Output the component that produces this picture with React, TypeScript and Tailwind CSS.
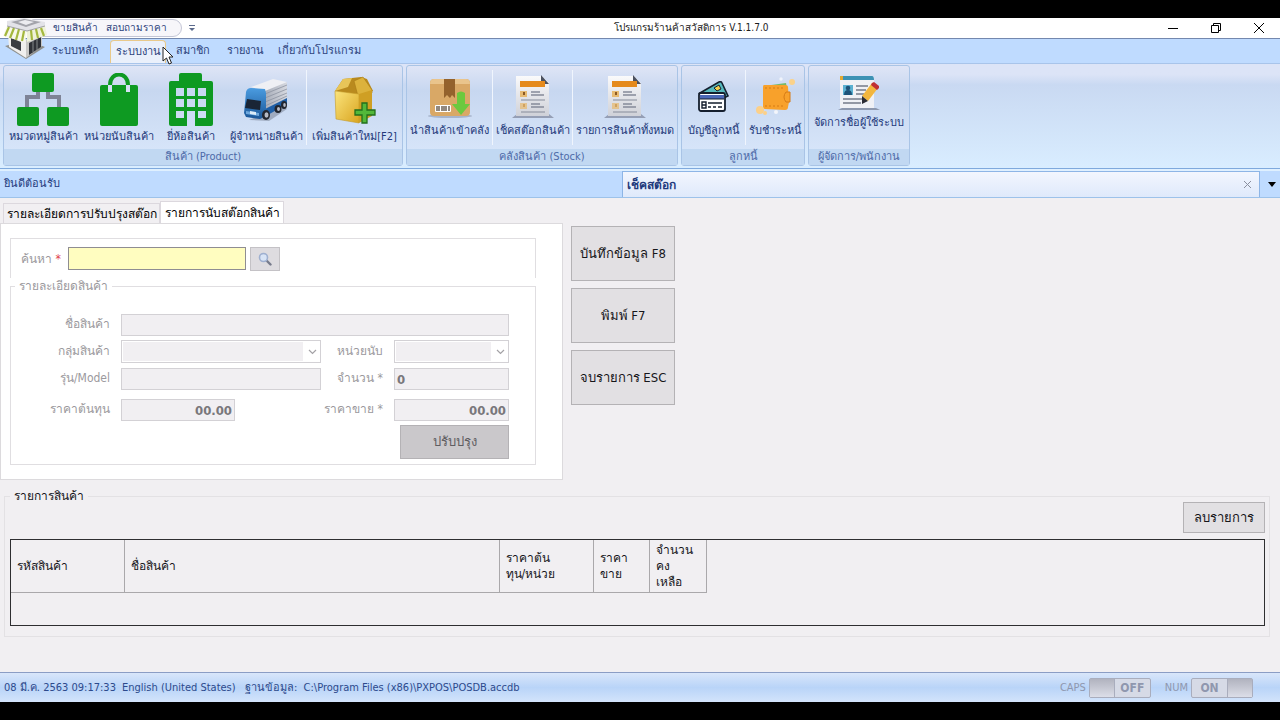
import type { ReactNode } from "react";

const OrgIcon = () => (
  <svg viewBox="0 0 54 54" className="h-[54px] w-[54px]" aria-hidden="true">
    <path d="M22 18v6H11v12M32 18v6h11v12" fill="none" stroke="#7e8396" strokeWidth="4" />
    <rect x="16" y="0" width="22" height="19" rx="2" fill="#0e9a22" />
    <rect x="1" y="34" width="22" height="19" rx="2" fill="#0e9a22" />
    <rect x="31" y="34" width="22" height="19" rx="2" fill="#0e9a22" />
  </svg>
);

const BagIcon = () => (
  <svg viewBox="0 0 54 54" className="h-[54px] w-[54px]" aria-hidden="true">
    <path d="M10 12h34q2 0 2 2v37q0 2-2 2H10q-2 0-2-2V14q0-2 2-2z" fill="#0e9a22" />
    <path d="M18 12v7M36 12v7" stroke="#d5e1f5" strokeWidth="4" />
    <path d="M18 12C18-2 36-2 36 12" fill="none" stroke="#0e9a22" strokeWidth="4" />
  </svg>
);

const BuildingIcon = () => (
  <svg viewBox="0 0 54 54" className="h-[54px] w-[54px]" aria-hidden="true">
    <path
      fillRule="evenodd"
      d="M17 0h19q2 0 2 2v6h9q2 0 2 2v41q0 2-2 2H31V38H23v15H7q-2 0-2-2V10q0-2 2-2h8V2q0-2 2-2zM12 15v8h8v-8zM23 15v8h8v-8zM34 15v8h8v-8zM12 26v8h8v-8zM23 26v8h8v-8zM34 26v8h8v-8zM12 38v7h8v-7zM34 38v7h8v-7z"
      fill="#0e9a22"
    />
  </svg>
);

const TruckIcon = () => (
  <svg viewBox="0 0 46 42" className="h-[42px] w-[46px]" aria-hidden="true">
    <defs>
      <linearGradient id="cab" x1="0" y1="0" x2="0" y2="1">
        <stop offset="0" stopColor="#4b9ce0" />
        <stop offset="1" stopColor="#1a5698" />
      </linearGradient>
      <linearGradient id="trailer" x1="0" y1="0" x2="1" y2="0">
        <stop offset="0" stopColor="#a4a9b5" />
        <stop offset="1" stopColor="#d6d9e0" />
      </linearGradient>
    </defs>
    <path d="M6 41l20 1 18-12-4-4z" fill="#5b6272" opacity=".4" />
    <path d="M20 10L44 3v21L22 35z" fill="url(#trailer)" />
    <path d="M8 8L30 0l14 3-22 9z" fill="#eff0f4" />
    <path d="M22 15l22-9M22 19l22-9M22 23l22-9M22 27l22-10" stroke="#8d93a1" strokeWidth=".8" />
    <path d="M22 30l22-11v6L23 37z" fill="#1f5fa6" />
    <path d="M3 13q1-4 5-4l14 1 1 4v23l-6 3-14-2-2-4 1-10z" fill="url(#cab)" />
    <path d="M4 20l14 2-1 9-15-2z" fill="#1a2536" />
    <path d="M3 32l13 2v3L3 35z" fill="#6ea8dd" />
    <path d="M7 32l6 1v3l-6-1z" fill="#dcecf8" />
    <ellipse cx="23" cy="36" rx="4" ry="5" fill="#22262f" />
    <ellipse cx="23.500" cy="36" rx="2" ry="2.700" fill="#b5bac5" />
    <ellipse cx="35" cy="30" rx="3.500" ry="4" fill="#22262f" />
    <ellipse cx="35.500" cy="30" rx="1.500" ry="2" fill="#b5bac5" />
    <ellipse cx="41" cy="26" rx="3" ry="4" fill="#22262f" />
    <ellipse cx="41.500" cy="26" rx="1.300" ry="2" fill="#b5bac5" />
  </svg>
);

const BoxAddIcon = () => (
  <svg viewBox="0 0 44 48" className="h-[48px] w-[44px]" aria-hidden="true">
    <defs>
      <linearGradient id="gold" x1="0" y1="0" x2="1" y2="1">
        <stop offset="0" stopColor="#fbe47c" />
        <stop offset="1" stopColor="#d9a520" />
      </linearGradient>
    </defs>
    <path d="M2 15L10 3 28 1l6 2 6 12-14 4z" fill="#b98a1e" />
    <path d="M10 3l9-1-4 9-13 4z" fill="#e8c558" />
    <path d="M21 5l9-4 9 13v3l-14 3z" fill="#dcb23c" stroke="#a87b16" strokeWidth=".6" />
    <path d="M2 15l24 3v29L3 43z" fill="url(#gold)" stroke="#c49a26" strokeWidth=".6" />
    <path d="M26 18l13-4v26l-13 7z" fill="#cf9f24" />
    <path d="M29 27h5v7h8v5h-8v8h-5v-8h-7v-5h7z" fill="#52b83a" stroke="#226f1c" strokeWidth="1.3" />
  </svg>
);

const PackageIcon = () => (
  <svg viewBox="0 0 44 44" className="h-[44px] w-[44px]" aria-hidden="true">
    <ellipse cx="22" cy="41" rx="22" ry="2" fill="#7f8ba3" opacity=".5" />
    <rect x="2" y="4" width="40" height="37" rx="4" fill="#d9a866" />
    <path d="M6 4h32q4 0 4 5H2q0-5 4-5z" fill="#e9c48c" />
    <path d="M16 4h11v19l-3-3-2 3-3-3-3 3z" fill="#94622c" />
    <rect x="7" y="30" width="16" height="7" rx="1" fill="#fff" />
    <path d="M9 31v5M11 31v5M14 31v5M16 31v5M18 31v5M21 31v5" stroke="#4a3b2c" strokeWidth="1.2" />
    <path d="M29 18q4-3 8 0v11h5l-9 11-9-11h5z" fill="#6cc93e" />
  </svg>
);

const DocumentIcon = () => (
  <svg viewBox="0 0 42 44" className="h-[44px] w-[42px]" aria-hidden="true">
    <defs>
      <linearGradient id="paper" x1="0" y1="0" x2="0" y2="1">
        <stop offset="0" stopColor="#fafafb" />
        <stop offset="1" stopColor="#cfd1d8" />
      </linearGradient>
    </defs>
    <path d="M0 43L5 39h32l5 4z" fill="#818aa0" opacity=".75" />
    <path d="M4 1h26l7 7v33H4z" fill="url(#paper)" />
    <path d="M29 0l8 9h-8z" fill="#4b5160" />
    <path d="M8 6h25v6H8z" fill="#e58a1c" />
    <rect x="8" y="16" width="7" height="6" fill="#e7bb73" />
    <path d="M11 17h2v3h-2zM11 29h2v3h-2z" fill="#8c5a24" />
    <path d="M19 17h9M19 20h13M19 29h9M19 32h13" stroke="#858b99" strokeWidth="1.4" />
    <rect x="8" y="28" width="7" height="6" fill="#e7bb73" fillOpacity=".75" />
    <path d="M9 25h24M9 37h24" stroke="#858b99" strokeWidth="1.2" />
  </svg>
);

const CardsIcon = () => (
  <svg viewBox="0 0 32 32" className="h-8 w-8" aria-hidden="true">
    <path d="M2 12L21 1q2-1 3 1l6 13-4 2z" fill="#56b9bd" stroke="#151f2e" strokeWidth="1.6" />
    <path d="M16 7l5-3 2 4-4 2z" fill="#f0cf4f" stroke="#151f2e" />
    <rect x="1" y="12" width="26" height="18" rx="2" fill="#fff" stroke="#151f2e" strokeWidth="1.8" />
    <path d="M2 14h24v4H2z" fill="#4b68b8" />
    <path d="M2 18h24" stroke="#151f2e" />
    <path d="M4 21h4v6H4zM4 24h4M10 22h14M10 26h3M15 26h3M20 26h4" fill="none" stroke="#151f2e" strokeWidth="1.4" />
  </svg>
);

const WalletIcon = () => (
  <svg viewBox="0 0 40 40" className="h-10 w-10" aria-hidden="true">
    <path d="M9 9l22-3 1 6H9z" fill="#79b868" />
    <path d="M9 8q-1 0-1 2v20q0 2 2 2l20 1q3 0 3-3l1-5-1-15q0-2-3-2H11z" fill="#f8a12b" />
    <path d="M10 11h20M10 29h20" stroke="#d67b16" strokeDasharray="2 2" />
    <path d="M31 15h4v10h-4q-4-5 0-10z" fill="#f8a12b" stroke="#d67b16" />
    <circle cx="37" cy="5" r="3" fill="#fbd28a" />
    <circle cx="5" cy="33" r="4" fill="#fcd089" />
    <circle cx="10" cy="36" r="2" fill="#fcd089" />
    <circle cx="26" cy="2" r="1.7" fill="#f0f3fb" />
    <circle cx="21" cy="35" r="2" fill="#f3f5fb" />
  </svg>
);

const ProfileIcon = () => (
  <svg viewBox="0 0 42 36" className="h-9 w-[42px]" aria-hidden="true">
    <path d="M0 35l4-2h34l4 2z" fill="#7d879c" opacity=".8" />
    <path d="M2 2h34v31H2z" fill="#f0f1f5" />
    <path d="M2 1h32q2 0 2 4H2z" fill="#3c92b4" />
    <path d="M2 1h3v4H2z" fill="#e2a832" />
    <rect x="5" y="10" width="10" height="10" fill="#5bb1d1" />
    <circle cx="10" cy="13" r="2.3" fill="#1e5378" />
    <path d="M6 20q0-5 4-5t4 5z" fill="#1e5378" />
    <path d="M18 11h12M18 15h10M18 19h8M5 24h20M5 28h18" stroke="#747b89" strokeWidth="1.3" />
    <path d="M34 8l6 5-10 13-6-5z" fill="#f2b63e" />
    <path d="M34 8l2-1 5 4v2l-2 2-6-5z" fill="#bf2f35" />
    <path d="M24 21l6 5-6 3z" fill="#2b2c33" />
  </svg>
);

const StoreIcon = () => (
  <svg viewBox="0 0 46 42" className="h-[42px] w-[46px]" aria-hidden="true">
    <path d="M3 28l21 13 19-12-18-7z" fill="#8f908d" />
    <path d="M6 15l18 7v18L7 29z" fill="#f0efee" />
    <path d="M24 22l16-6v12L24 40z" fill="#c9c8c6" />
    <path d="M9 20l10 4v9L9 28z" fill="#3a3d42" />
    <path d="M27 25l12-6v10l-12 8z" fill="#2f3237" />
    <path d="M31 23v11M35 21v11" stroke="#868a8c" />
    <path d="M5 3L22 0l21 4v4L25 13 5 9z" fill="#e3e3e8" />
    <path d="M9 4l13-3 17 3-15 5z" fill="#a3a4ab" />
    <path d="M16 4l7-2 9 2-8 3z" fill="#ececf0" />
    <path d="M5 8l20 5-2 11L1 18z" fill="#f8f9ea" />
    <path d="M25 13l18-5 2 9-20 7z" fill="#eff2d8" />
    <path
      d="M7 9L3 18M12 10L8 20M17 11l-3 11M22 13l-2 10M29 12l1 10M34 11l2 9M39 10l3 8"
      stroke="#a4b83e"
      strokeWidth="2.200"
    />
    <path d="M5 8l20 5 18-5" fill="none" stroke="#8d8e93" strokeWidth=".8" />
  </svg>
);

const MagnifierIcon = () => (
  <svg viewBox="0 0 14 14" className="h-3.5 w-3.5" aria-hidden="true">
    <path d="M8.5 8.5l4 4" stroke="#777b8c" strokeWidth="2.4" strokeLinecap="round" />
    <circle cx="5.5" cy="5.5" r="4" fill="#d8e4f6" stroke="#9fb0d0" strokeWidth="1.6" />
  </svg>
);

const Chevron = () => (
  <svg viewBox="0 0 9 6" className="pointer-events-none absolute top-[9px] right-1 h-1.5 w-[9px]" aria-hidden="true">
    <path d="M1 1l3.500 3.500L8 1" fill="none" stroke="#a3a1a5" strokeWidth="1.200" />
  </svg>
);

type Item = { label: string; icon: ReactNode; width: string };
type Group = { title: string; iconHeight: string; items: Item[] };

const groups: Group[] = [
  {
    title: "สินค้า (Product)",
    iconHeight: "h-[60px]",
    items: [
      { label: "หมวดหมู่สินค้า", icon: <OrgIcon />, width: "w-[78px]" },
      { label: "หน่วยนับสินค้า", icon: <BagIcon />, width: "w-[74px]" },
      { label: "ยี่ห้อสินค้า", icon: <BuildingIcon />, width: "w-[70px]" },
      { label: "ผู้จำหน่ายสินค้า", icon: <TruckIcon />, width: "w-[80px]" },
      { label: "เพิ่มสินค้าใหม่[F2]", icon: <BoxAddIcon />, width: "w-[96px] border-l" },
    ],
  },
  {
    title: "คลังสินค้า (Stock)",
    iconHeight: "h-[53px]",
    items: [
      { label: "นำสินค้าเข้าคลัง", icon: <PackageIcon />, width: "w-[85px]" },
      { label: "เช็คสต๊อกสินค้า", icon: <DocumentIcon />, width: "w-[80px] border-l" },
      { label: "รายการสินค้าทั้งหมด", icon: <DocumentIcon />, width: "w-[105px] border-l" },
    ],
  },
  {
    title: "ลูกหนี้",
    iconHeight: "h-[53px]",
    items: [
      { label: "บัญชีลูกหนี้", icon: <CardsIcon />, width: "w-[63px]" },
      { label: "รับชำระหนี้", icon: <WalletIcon />, width: "w-[59px] border-l" },
    ],
  },
  {
    title: "ผู้จัดการ/พนักงาน",
    iconHeight: "h-[45px]",
    items: [{ label: "จัดการชื่อผู้ใช้ระบบ", icon: <ProfileIcon />, width: "w-[100px]" }],
  },
];

const fieldBox = "h-[22px] w-full border border-[#d3d1d5] bg-[#f1eff2] px-0.5 text-[13px] font-bold text-[#79777b]";
const selectBox =
  "block h-[23px] w-full appearance-none border-y-2 border-r-[18px] border-l-2 border-white bg-[#f1eff2] outline outline-[#d3d1d5] -outline-offset-1";
const fieldLabel = "pr-0.5 pb-1 text-right whitespace-nowrap text-[#9b999d]";
const actionButton = "border border-[#b4b2b5] bg-[#e2e0e3] text-[13px] text-[#16161a]";

export default function App() {
  return (
    <div className="flex min-h-screen flex-col bg-black py-[18px] font-['DejaVu_Sans_Condensed','DejaVu_Sans',sans-serif] text-[12px] leading-4">
      <div className="relative flex grow flex-col bg-[#f1eff2]">
        <header className="text-[11px]">
          <div className="flex h-5 items-center bg-white text-[#1c1c1c]">
            <nav className="ml-8 flex h-[18px] w-[150px] items-center gap-2 rounded-r-full border border-[#c4c6d6] bg-[#f7f6fa] pl-5 text-[10px] whitespace-nowrap text-[#2d437c]">
              <button type="button">ขายสินค้า</button>
              <button type="button">สอบถามราคา</button>
            </nav>
            <button type="button" aria-label="ปรับแต่งแถบเครื่องมือ" className="ml-1.5">
              <svg viewBox="0 0 8 8" className="h-2 w-2" aria-hidden="true">
                <path d="M1 1.500h6" stroke="#5b6a8c" />
                <path d="M1 4h6L4 7z" fill="#5b6a8c" />
              </svg>
            </button>
            <h1 className="grow pl-9 text-center text-[10px]">โปรแกรมร้านค้าสวัสดิการ V.1.1.7.0</h1>
            <div className="flex shrink-0 text-black">
              <button type="button" aria-label="ย่อหน้าต่าง" className="flex w-[43px] justify-center">
                <svg viewBox="0 0 10 10" className="h-2.5 w-2.5"><path d="M0 5.500h10" stroke="currentColor" /></svg>
              </button>
              <button type="button" aria-label="คืนขนาดหน้าต่าง" className="flex w-[43px] justify-center">
                <svg viewBox="0 0 10 10" className="h-2.5 w-2.5"><path d="M.5 2.500h7v7h-7zM2.500 2.500v-2h7v7h-2" fill="none" stroke="currentColor" /></svg>
              </button>
              <button type="button" aria-label="ปิดหน้าต่าง" className="flex w-[43px] justify-center">
                <svg viewBox="0 0 10 10" className="h-2.5 w-2.5"><path d="M0 0l10 10M10 0L0 10" stroke="currentColor" /></svg>
              </button>
            </div>
          </div>

          <nav className="flex h-[25px] items-end border-t border-[#7488ae] bg-[#bfdbff] pl-10 text-[#2d437c]">
            <a href="#main" className="flex h-6 w-[70px] items-center justify-center">ระบบหลัก</a>
            <a href="#work" className="flex h-[23px] w-[56px] items-center justify-center rounded-t border border-b-0 border-[#e9c98a] bg-[#eaf0fb]">ระบบงาน</a>
            <a href="#member" className="flex h-6 w-[54px] items-center justify-center">สมาชิก</a>
            <a href="#report" className="flex h-6 w-[50px] items-center justify-center">รายงาน</a>
            <a href="#about" className="flex h-6 w-[98px] items-center justify-center">เกี่ยวกับโปรแกรม</a>
          </nav>

          <div className="flex gap-[3px] border-y border-b-[#7fa9dd] border-t-[#a8c4ea] bg-linear-to-b from-[#dce4f7] from-10% via-[#c9d9f2] via-20% to-[#d9edff] px-[3px] pt-px pb-0.5">
            {groups.map((group) => (
              <section
                key={group.title}
                className="flex flex-col rounded-[3px] border border-[#a9c4e6] bg-linear-to-b from-[#dfe5f6] via-[#c7d7f0] via-25% to-[#dae8fb]"
              >
                <div className="flex h-[83px] py-1">
                  {group.items.map((item) => (
                    <button
                      key={item.label}
                      type="button"
                      className={`flex flex-col items-center border-[#f0f5fd] whitespace-nowrap text-[#23397a] ${item.width}`}
                    >
                      <span className={`flex items-center justify-center ${group.iconHeight}`}>{item.icon}</span>
                      <span>{item.label}</span>
                    </button>
                  ))}
                </div>
                <h2 className="bg-[#c1d8f2] text-center text-[#4d6aa8]">{group.title}</h2>
              </section>
            ))}
          </div>
        </header>

        <nav className="flex h-[29px] border-t-2 border-b border-t-[#dff0ff] border-b-[#9dc2ea] bg-[#bfdbff] text-[11px] text-[#1e3a7c]">
          <a href="#welcome" className="flex w-[48.6%] items-center pl-1">ยินดีต้อนรับ</a>
          <div className="flex grow items-center justify-between border border-b-0 border-[#8db5e6] bg-linear-to-b from-[#f2f6fe] to-[#dfe9fb] pr-2 pl-1">
            <a href="#stock" className="text-[12px] font-bold">เช็คสต๊อก</a>
            <button type="button" aria-label="ปิดแท็บ">
              <svg viewBox="0 0 7 7" className="h-[7px] w-[7px]"><path d="M0 0l7 7M7 0L0 7" stroke="#8a8f9e" /></svg>
            </button>
          </div>
          <button type="button" aria-label="รายการแท็บ" className="flex w-5 items-center justify-end">
            <svg viewBox="0 0 8 5" className="mr-1 h-[5px] w-2"><path d="M0 0h8L4 5z" /></svg>
          </button>
        </nav>

        <main className="grow">
          <div className="flex items-start gap-2 pt-[3px]">
            <div className="w-[563px] shrink-0">
              <div className="flex items-end pl-[3px] text-black" role="tablist">
                <button type="button" role="tab" aria-selected="false" className="h-5 w-[157px] border border-b-0 border-[#dcd8de] whitespace-nowrap">
                  รายละเอียดการปรับปรุงสต๊อก
                </button>
                <button type="button" role="tab" aria-selected="true" className="h-[22px] w-[124px] border border-b-0 border-[#dcd8de] bg-white whitespace-nowrap">
                  รายการนับสต๊อกสินค้า
                </button>
              </div>
              <form className="border border-[#dcdadd] bg-white pt-3.5 pr-[26px] pb-3.5 pl-[9px]">
                <div className="flex h-10 items-center border border-b-0 border-[#e0dee1] pl-2.5 text-[#9b999d]">
                  <label htmlFor="search" className="w-[47px] whitespace-nowrap">
                    ค้นหา <span className="text-[#e0404a]">*</span>
                  </label>
                  <input id="search" className="h-[23px] w-[178px] border border-[#8f8d92] bg-[#fffdc0] px-1" />
                  <button type="button" aria-label="ค้นหาสินค้า" className="ml-1 flex h-6 w-[30px] items-center justify-center border border-[#c4c2c6] bg-[#dedce0]">
                    <MagnifierIcon />
                  </button>
                </div>
                <fieldset className="border border-[#e0dee1] pb-[5px]">
                  <legend className="ml-1 px-1 text-[#9b999d]">รายละเอียดสินค้า</legend>
                  <div className="grid grid-cols-[101px_200px_55px_115px] grid-rows-[22px_23px_23px_27px_34px] items-end gap-x-[9px] gap-y-1 pt-5">
                    <label htmlFor="name" className={fieldLabel}>ชื่อสินค้า</label>
                    <input id="name" disabled className={`col-span-3 ${fieldBox}`} />
                    <label htmlFor="group" className={fieldLabel}>กลุ่มสินค้า</label>
                    <span className="relative block">
                      <select id="group" disabled className={selectBox} />
                      <Chevron />
                    </span>
                    <label htmlFor="unit" className={fieldLabel}>หน่วยนับ</label>
                    <span className="relative block">
                      <select id="unit" disabled className={selectBox} />
                      <Chevron />
                    </span>
                    <label htmlFor="model" className={fieldLabel}>รุ่น/Model</label>
                    <input id="model" disabled className={fieldBox} />
                    <label htmlFor="amount" className={fieldLabel}>จำนวน *</label>
                    <input id="amount" disabled defaultValue="0" className={fieldBox} />
                    <label htmlFor="cost" className={fieldLabel}>ราคาต้นทุน</label>
                    <input id="cost" disabled defaultValue="00.00" className={`max-w-[114px] text-right ${fieldBox}`} />
                    <label htmlFor="price" className="justify-self-end pr-0.5 pb-1 whitespace-nowrap text-[#9b999d]">ราคาขาย *</label>
                    <input id="price" disabled defaultValue="00.00" className={`text-right ${fieldBox}`} />
                    <button type="button" disabled className="col-start-4 ml-1.5 h-[34px] border border-[#b4b2b5] bg-[#cac8cb] text-[13px] text-[#5f5d61]">
                      ปรับปรุง
                    </button>
                  </div>
                </fieldset>
              </form>
            </div>

            <div className="flex w-[104px] flex-col gap-[7px] pt-[25px]">
              <button type="button" className={`h-[55px] ${actionButton}`}>บันทึกข้อมูล F8</button>
              <button type="button" className={`h-[55px] ${actionButton}`}>พิมพ์ F7</button>
              <button type="button" className={`h-[55px] ${actionButton}`}>จบรายการ ESC</button>
            </div>
          </div>

          <fieldset className="mt-2.5 mr-2.5 ml-1 border border-[#e3e1e4] pr-1 pb-2.5 pl-[5px]">
            <legend className="px-1 leading-3 text-[#16161a]">รายการสินค้า</legend>
            <div className="flex justify-end">
              <button type="button" className={`h-[31px] w-[82px] ${actionButton}`}>ลบรายการ</button>
            </div>
            <div className="mt-1.5 min-h-[87px] border border-[#2e2e30]">
              <table className="w-[696px] table-fixed border-collapse border-r border-b border-[#aaa8ab] text-left text-[#16161a]">
                <thead>
                  <tr className="h-[52px] *:border-r *:border-[#aaa8ab] *:px-1.5 *:font-normal">
                    <th className="w-[113px]">รหัสสินค้า</th>
                    <th className="w-[375px]">ชื่อสินค้า</th>
                    <th className="w-[94px]">ราคาต้น<br />ทุน/หน่วย</th>
                    <th className="w-[56px]">ราคา<br />ขาย</th>
                    <th>จำนวน<br />คง<br />เหลือ</th>
                  </tr>
                </thead>
              </table>
            </div>
          </fieldset>
        </main>

        <footer className="flex h-[30px] items-center border-t border-[#8b9dc4] bg-linear-to-b from-[#d9e6fa] via-[#b9d4f8] via-50% to-[#d3e4fb] pr-[27px] pl-1 text-[11px] whitespace-nowrap text-[#2d4a8c]">
          <span className="w-[118px]">08 มี.ค. 2563 09:17:33</span>
          <span className="w-[123px]">English (United States)</span>
          <span>ฐานข้อมูล:&nbsp; C:\Program Files (x86)\PXPOS\POSDB.accdb</span>
          <div className="ml-auto flex items-center gap-[3px] text-[#8f97ae]">
            <span>CAPS</span>
            <button type="button" role="switch" aria-checked="false" aria-label="CAPS" className="flex h-5 w-[62px] rounded-xs border border-[#a9adbd] bg-[#d6dae6] text-[12px] font-bold">
              <span className="h-full w-[25px] border-r border-[#a9adbd] bg-linear-to-b from-[#b1b3bf] to-[#dcdee8]" />
              <span className="grow self-center">OFF</span>
            </button>
            <span className="ml-[11px]">NUM</span>
            <button type="button" role="switch" aria-checked="true" aria-label="NUM" className="flex h-5 w-[62px] rounded-xs border border-[#a9adbd] bg-[#d6dae6] text-[12px] font-bold">
              <span className="grow self-center">ON</span>
              <span className="h-full w-[25px] border-l border-[#a9adbd] bg-linear-to-b from-[#b1b3bf] to-[#dcdee8]" />
            </button>
          </div>
        </footer>

        <span className="absolute top-0 left-0.5">
          <StoreIcon />
        </span>
        <svg viewBox="0 0 12 19" className="pointer-events-none absolute top-[28px] left-[162px] h-[19px] w-3" aria-hidden="true">
          <path d="M1 1v14l3.500-3 2.500 6 2.500-1-2.500-6H11z" fill="#fff" stroke="#222" />
        </svg>
      </div>
    </div>
  );
}
